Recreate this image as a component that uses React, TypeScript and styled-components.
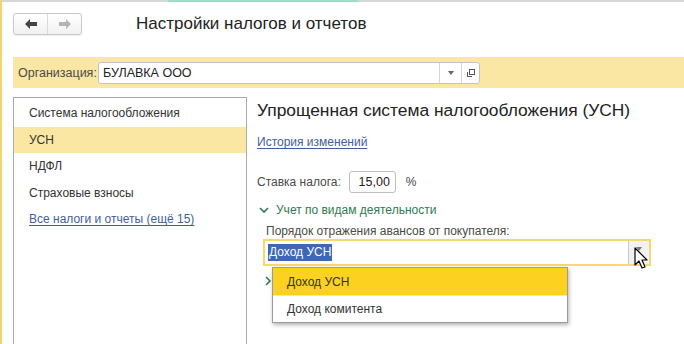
import React from "react";
import styled, { createGlobalStyle } from "styled-components";

const Global = createGlobalStyle`
  html, body { margin: 0; padding: 0; background: #fff; }
  body { font-family: "Liberation Sans", Arial, sans-serif; color: #333; }
`;

const Frame = styled.div`
  position: relative;
  width: 684px;
  height: 344px;
  overflow: hidden;
  box-sizing: border-box;
  border-left: 2px solid #f3d36b;
  background: #fff;
  display: flex;
  flex-direction: column;
`;

const TopStrip = styled.div`
  height: 2px;
  background: #d6d6d6;
  display: flex;
  padding-left: 166px;
`;

const TopTab = styled.div`
  width: 190px;
  height: 2px;
  background: #9fdcc4;
`;

const Header = styled.div`
  display: flex;
  align-items: center;
  height: 22px;
  margin-top: 11px;
  padding-left: 11px;
`;

const NavGroup = styled.div`
  display: flex;
  width: 69px;
  height: 22px;
  box-sizing: border-box;
  border: 1px solid #c9c9c9;
  border-radius: 3px;
  background: linear-gradient(#ffffff, #f1f1f1);
  box-shadow: 0 1px 1px rgba(0, 0, 0, 0.08);
`;

const NavButton = styled.div<{ $divider?: boolean }>`
  flex: 1;
  display: flex;
  align-items: center;
  justify-content: center;
  border-left: ${(p) => (p.$divider ? "1px solid #dadada" : "none")};
`;

const Title = styled.h1`
  margin: 0 0 0 54px;
  font-size: 17px;
  font-weight: normal;
  color: #222;
`;

const OrgBar = styled.div`
  margin: 22px 0 0 11px;
  height: 31px;
  background: #fbe7a4;
  display: flex;
  align-items: center;
  padding-left: 5px;
`;

const OrgLabel = styled.span`
  font-size: 12.5px;
  color: #4a4a4a;
  width: 80px;
`;

const OrgField = styled.div`
  display: flex;
  width: 382px;
  height: 22px;
  box-sizing: border-box;
  border: 1px solid #c3c3c3;
  border-radius: 3px;
  background: #fff;
`;

const OrgValue = styled.div`
  flex: 1;
  font-size: 12.5px;
  color: #222;
  padding-left: 4px;
  line-height: 20px;
`;

const FieldBtn = styled.div<{ $w: number }>`
  width: ${(p) => p.$w}px;
  border-left: 1px solid #d6d6d6;
  display: flex;
  align-items: center;
  justify-content: center;
`;

const Main = styled.div`
  display: flex;
  margin: 9px 0 0 11px;
  flex: 1;
`;

const LeftPanel = styled.div`
  width: 234px;
  box-sizing: border-box;
  border: 1px solid #a9a9a9;
  border-bottom: none;
  padding-top: 2px;
  display: flex;
  flex-direction: column;
`;

const NavItem = styled.div<{ $active?: boolean; $link?: boolean }>`
  height: 26.5px;
  display: flex;
  align-items: center;
  padding-left: 15px;
  font-size: 12px;
  background: ${(p) => (p.$active ? "#fbe7a4" : "transparent")};
  color: ${(p) => (p.$link ? "#3f5f9c" : "#333")};
  text-decoration: ${(p) => (p.$link ? "underline" : "none")};
  text-underline-offset: 2px;
`;

const RightPanel = styled.div`
  flex: 1;
  padding: 2px 0 0 10px;
  display: flex;
  flex-direction: column;
`;

const Heading = styled.h2`
  margin: 0;
  font-size: 17.4px;
  font-weight: normal;
  line-height: 22px;
  color: #222;
`;

const Link = styled.a`
  margin-top: 13px;
  font-size: 12px;
  line-height: 16px;
  color: #3f5f9c;
  text-decoration: underline;
  text-underline-offset: 2px;
  align-self: flex-start;
`;

const RateRow = styled.div`
  margin-top: 21px;
  display: flex;
  align-items: center;
  font-size: 12px;
  color: #4a4a4a;
`;

const RateInput = styled.div`
  margin-left: 8px;
  width: 47px;
  height: 22px;
  box-sizing: border-box;
  border: 1px solid #bdbdbd;
  border-radius: 3px;
  text-align: right;
  padding-right: 5px;
  line-height: 20px;
  color: #222;
  font-size: 12.5px;
`;

const Percent = styled.span`
  margin-left: 10px;
  color: #444;
`;

const GroupHeader = styled.div`
  margin-top: 9px;
  display: flex;
  align-items: center;
  font-size: 12px;
  line-height: 16px;
  color: #2f7a50;
  padding-left: 2px;
  gap: 7px;
`;

const GroupBody = styled.div`
  padding-left: 6px;
  display: flex;
  flex-direction: column;
`;

const FieldLabel = styled.div`
  margin-top: 5px;
  padding-left: 3px;
  font-size: 12px;
  line-height: 16px;
  color: #4a4a4a;
`;

const Combo = styled.div`
  width: 388px;
  height: 27px;
  box-sizing: border-box;
  border: 2px solid #f5d970;
  background: #fff;
  display: flex;
`;

const ComboText = styled.div`
  flex: 1;
  display: flex;
  align-items: center;
  padding-left: 3px;
`;

const Selected = styled.span`
  background: #3e66b9;
  color: #fff;
  font-size: 12px;
  line-height: 17px;
  padding: 0 1px;
`;

const ComboBtn = styled.div`
  width: 21px;
  background: #f2f2f2;
  border-left: 1px solid #c9c9c9;
  display: flex;
  justify-content: center;
  padding-top: 6px;
  box-sizing: border-box;
`;

const CollapsedRow = styled.div`
  margin-top: 7px;
  height: 16px;
  display: flex;
  align-items: center;
`;

const Popup = styled.div`
  position: absolute;
  left: 270px;
  top: 267px;
  width: 296px;
  box-sizing: border-box;
  border: 1px solid #9a9a9a;
  background: #fff;
  box-shadow: 1px 2px 4px rgba(0, 0, 0, 0.3);
`;

const PopupItem = styled.div<{ $active?: boolean }>`
  height: ${(p) => (p.$active ? 27 : 26)}px;
  display: flex;
  align-items: center;
  padding-left: 14px;
  font-size: 12px;
  color: #333;
  background: ${(p) => (p.$active ? "#fcd11f" : "#fff")};
  border-bottom: ${(p) => (p.$active ? "1px solid #fbe89a" : "none")};
`;

const Cursor = styled.svg`
  position: absolute;
  left: 632px;
  top: 247px;
`;

const Arrow = ({ color }: { color: string }) => (
  <svg width="14" height="12" viewBox="0 0 14 12">
    <path d="M1 6 L6 1 L6 4 L13 4 L13 8 L6 8 L6 11 Z" fill={color} />
  </svg>
);

const ArrowRight = ({ color }: { color: string }) => (
  <svg width="14" height="12" viewBox="0 0 14 12">
    <path d="M13 6 L8 1 L8 4 L1 4 L1 8 L8 8 L8 11 Z" fill={color} />
  </svg>
);

const Chevron = ({ dir }: { dir: "down" | "right" }) => (
  <svg width="10" height="10" viewBox="0 0 10 10">
    <path
      d={dir === "down" ? "M1 3 L5 7 L9 3" : "M3 1 L7 5 L3 9"}
      fill="none"
      stroke="#2f7a50"
      strokeWidth="1.6"
    />
  </svg>
);

export default function App() {
  return (
    <>
      <Global />
      <Frame>
        <TopStrip>
          <TopTab />
        </TopStrip>
        <Header>
          <NavGroup>
            <NavButton>
              <Arrow color="#444" />
            </NavButton>
            <NavButton $divider>
              <ArrowRight color="#b4b4b4" />
            </NavButton>
          </NavGroup>
          <Title>Настройки налогов и отчетов</Title>
        </Header>
        <OrgBar>
          <OrgLabel>Организация:</OrgLabel>
          <OrgField>
            <OrgValue>БУЛАВКА ООО</OrgValue>
            <FieldBtn $w={21}>
              <svg width="6" height="4" viewBox="0 0 6 4">
                <path d="M0 0 L6 0 L3 4 Z" fill="#666" />
              </svg>
            </FieldBtn>
            <FieldBtn $w={17}>
              <svg width="10" height="10" viewBox="0 0 10 10">
                <rect x="3.5" y="1.5" width="5" height="5" fill="none" stroke="#555" strokeWidth="1" />
                <path d="M1.5 4 L1.5 8.5 L6 8.5" fill="none" stroke="#555" strokeWidth="1" />
              </svg>
            </FieldBtn>
          </OrgField>
        </OrgBar>
        <Main>
          <LeftPanel>
            <NavItem>Система налогообложения</NavItem>
            <NavItem $active>УСН</NavItem>
            <NavItem>НДФЛ</NavItem>
            <NavItem>Страховые взносы</NavItem>
            <NavItem $link>Все налоги и отчеты (ещё 15)</NavItem>
          </LeftPanel>
          <RightPanel>
            <Heading>Упрощенная система налогообложения (УСН)</Heading>
            <Link>История изменений</Link>
            <RateRow>
              Ставка налога:
              <RateInput>15,00</RateInput>
              <Percent>%</Percent>
            </RateRow>
            <GroupHeader>
              <Chevron dir="down" />
              Учет по видам деятельности
            </GroupHeader>
            <GroupBody>
              <FieldLabel>Порядок отражения авансов от покупателя:</FieldLabel>
              <Combo>
                <ComboText>
                  <Selected>Доход УСН</Selected>
                </ComboText>
                <ComboBtn>
                  <svg width="6" height="4" viewBox="0 0 6 4">
                    <path d="M0 0 L6 0 L3 4 Z" fill="#777" />
                  </svg>
                </ComboBtn>
              </Combo>
              <CollapsedRow>
                <Chevron dir="right" />
              </CollapsedRow>
            </GroupBody>
          </RightPanel>
        </Main>
        <Popup>
          <PopupItem $active>Доход УСН</PopupItem>
          <PopupItem>Доход комитента</PopupItem>
        </Popup>
        <Cursor width="16" height="24" viewBox="0 0 16 24">
          <path
            d="M1 1 L1 18 L5 14 L8 21 L11 20 L8 13 L13 13 Z"
            fill="#fff"
            stroke="#000"
            strokeWidth="1.2"
            strokeLinejoin="round"
          />
        </Cursor>
      </Frame>
    </>
  );
}
